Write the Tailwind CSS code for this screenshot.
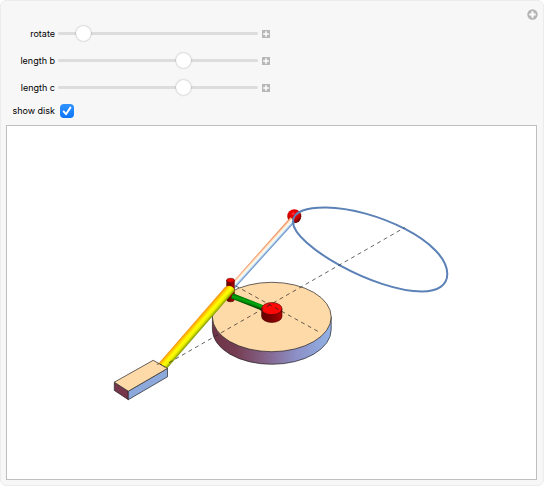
<!DOCTYPE html>
<html lang="en">
<head>
<meta charset="utf-8">
<meta name="viewport" content="width=device-width, initial-scale=1">
<title>Crank linkage</title>
<script src="https://cdn.jsdelivr.net/npm/@tailwindcss/browser@4"></script>
</head>
<body class="bg-white font-['Inter','Liberation_Sans',sans-serif] text-[9px] font-normal text-black">
<main class="rounded-md border border-[#ececec] bg-[#f7f7f7] pr-1.5 pb-[5px] pl-[5px]">
  <header class="flex h-[19px] items-end justify-end">
    <button type="button" aria-label="Show options" class="-mr-px block">
      <svg class="size-[11px]" viewBox="0 0 11 11"><circle cx="5.5" cy="5.5" r="5.2" fill="#b4b4b4"/><path d="M5.5 2.3v6.4M2.3 5.5h6.4" stroke="#fff" stroke-width="2"/></svg>
    </button>
  </header>

  <form class="grid grid-cols-[49px_200px_auto] items-center justify-start gap-x-[3px] auto-rows-[27px]">
    <label for="rotate" class="text-right whitespace-nowrap">rotate</label>
    <input id="rotate" type="range" min="0" max="1000" value="98" class="h-4 w-full appearance-none bg-transparent [&::-webkit-slider-runnable-track]:h-[3px] [&::-webkit-slider-runnable-track]:rounded-full [&::-webkit-slider-runnable-track]:bg-[#dddddd] [&::-webkit-slider-thumb]:-mt-[6px] [&::-webkit-slider-thumb]:size-[15px] [&::-webkit-slider-thumb]:appearance-none [&::-webkit-slider-thumb]:rounded-full [&::-webkit-slider-thumb]:bg-white [&::-webkit-slider-thumb]:shadow-[0_0_2px_rgba(0,0,0,0.35)]">
    <button type="button" aria-label="Rotate controls" class="ml-px size-[8px] bg-[#b8b8b8]"><svg class="size-full" viewBox="0 0 8 8"><path d="M4 1.2v5.6M1.2 4h5.6" stroke="#fff" stroke-width="1.5"/></svg></button>

    <label for="length-b" class="text-right whitespace-nowrap">length b</label>
    <input id="length-b" type="range" min="0" max="1000" value="640" class="h-4 w-full appearance-none bg-transparent [&::-webkit-slider-runnable-track]:h-[3px] [&::-webkit-slider-runnable-track]:rounded-full [&::-webkit-slider-runnable-track]:bg-[#dddddd] [&::-webkit-slider-thumb]:-mt-[6px] [&::-webkit-slider-thumb]:size-[15px] [&::-webkit-slider-thumb]:appearance-none [&::-webkit-slider-thumb]:rounded-full [&::-webkit-slider-thumb]:bg-white [&::-webkit-slider-thumb]:shadow-[0_0_2px_rgba(0,0,0,0.35)]">
    <button type="button" aria-label="Length b controls" class="ml-px size-[8px] bg-[#b8b8b8]"><svg class="size-full" viewBox="0 0 8 8"><path d="M4 1.2v5.6M1.2 4h5.6" stroke="#fff" stroke-width="1.5"/></svg></button>

    <label for="length-c" class="text-right whitespace-nowrap">length c</label>
    <input id="length-c" type="range" min="0" max="1000" value="640" class="h-4 w-full appearance-none bg-transparent [&::-webkit-slider-runnable-track]:h-[3px] [&::-webkit-slider-runnable-track]:rounded-full [&::-webkit-slider-runnable-track]:bg-[#dddddd] [&::-webkit-slider-thumb]:-mt-[6px] [&::-webkit-slider-thumb]:size-[15px] [&::-webkit-slider-thumb]:appearance-none [&::-webkit-slider-thumb]:rounded-full [&::-webkit-slider-thumb]:bg-white [&::-webkit-slider-thumb]:shadow-[0_0_2px_rgba(0,0,0,0.35)]">
    <button type="button" aria-label="Length c controls" class="ml-px size-[8px] bg-[#b8b8b8]"><svg class="size-full" viewBox="0 0 8 8"><path d="M4 1.2v5.6M1.2 4h5.6" stroke="#fff" stroke-width="1.5"/></svg></button>

    <div class="col-span-3 grid h-5 grid-cols-subgrid items-center self-start">
      <label for="show-disk" class="text-right whitespace-nowrap">show disk</label>
      <span class="relative ml-0.5 block size-[14px]">
        <input id="show-disk" type="checkbox" checked class="peer block size-full appearance-none rounded-[4px] border border-[#c8c8c8] bg-white checked:border-0 checked:bg-linear-to-b checked:from-[#2f93ff] checked:to-[#0a75fa]">
        <svg class="pointer-events-none absolute inset-0 hidden size-full peer-checked:block" viewBox="0 0 14 14"><path d="M3.6 7.4 6 10.2 10.4 3.6" fill="none" stroke="#fff" stroke-width="1.9" stroke-linecap="round" stroke-linejoin="round"/></svg>
      </span>
    </div>
  </form>

  <section class="-mt-[3px] border border-[#bfbfbf] bg-white">
    <svg class="block h-auto w-full" viewBox="7 126 529 353" role="img" aria-label="Linkage with rotating disk, sliding block and traced curve">
      <defs>
        <linearGradient id="rim"><stop offset="0" stop-color="#6e3447"/><stop offset=".2" stop-color="#753d52"/><stop offset=".45" stop-color="#84648b"/><stop offset=".7" stop-color="#8c8fc5"/><stop offset="1" stop-color="#92b2e6"/></linearGradient>
        <linearGradient id="hub"><stop offset="0" stop-color="#650000"/><stop offset=".5" stop-color="#7c0000"/><stop offset="1" stop-color="#b00000"/></linearGradient>
        <linearGradient id="yellow" gradientUnits="userSpaceOnUse" x1="191" y1="325" x2="199" y2="332"><stop offset="0" stop-color="#f07818"/><stop offset=".25" stop-color="#ffc400"/><stop offset=".5" stop-color="#ffff00"/><stop offset=".72" stop-color="#eaf000"/><stop offset="1" stop-color="#789000"/></linearGradient>
        <linearGradient id="glass" gradientUnits="userSpaceOnUse" x1="262.3" y1="248.8" x2="266.5" y2="252.6"><stop offset="0" stop-color="#ee8c58"/><stop offset=".28" stop-color="#ffdcbc"/><stop offset=".5" stop-color="#fffff0"/><stop offset=".7" stop-color="#dceefa"/><stop offset="1" stop-color="#6f98cc"/></linearGradient>
        <linearGradient id="green" gradientUnits="userSpaceOnUse" x1="249" y1="299" x2="247" y2="305"><stop offset="0" stop-color="#006a00"/><stop offset=".4" stop-color="#00ac10"/><stop offset=".65" stop-color="#008c08"/><stop offset="1" stop-color="#003b00"/></linearGradient>
        <radialGradient id="ball" cx=".42" cy=".32" r=".68"><stop offset="0" stop-color="#ff4040"/><stop offset=".22" stop-color="#f00000"/><stop offset=".65" stop-color="#c80000"/><stop offset="1" stop-color="#600000"/></radialGradient>
      </defs>

      <g stroke="#222" stroke-width=".7" stroke-linejoin="round">
        <path d="M212.4 317v12.6a59.4 34.7 0 0 0 118.8 0V317z" fill="url(#rim)"/>
        <ellipse cx="271.8" cy="317" rx="59.4" ry="34.7" fill="#ffdaa9"/>
      </g>

      <circle cx="294.3" cy="216.2" r="7" fill="url(#ball)"/>
      <path d="M233.5 281 290.5 217 294.8 222.2 234.5 288.7z" fill="url(#glass)"/>

      <path d="M226.6 280.3v19.2a3.9 2.3 0 0 0 7.8 0v-19.2z" fill="url(#hub)" stroke="#400" stroke-width=".5"/>
      <ellipse cx="230.5" cy="280.3" rx="3.9" ry="2.1" fill="#f00000" stroke="#400" stroke-width=".5"/>
      <path d="M233 293.3 263.5 305.2V311.3L231 298.6z" fill="url(#green)"/>
      <path d="M261.6 308.6v7.8a10.2 6.1 0 0 0 20.4 0v-7.8z" fill="url(#hub)" stroke="#400" stroke-width=".6"/>
      <ellipse cx="271.8" cy="308.6" rx="10.2" ry="6.1" fill="#ff0808" stroke="#400" stroke-width=".6"/>

      <path d="M157.8 364.3 224.8 287.3Q227.5 285 231 286.2 235 288 234.4 291.3L167.2 368.3z" fill="url(#yellow)"/>

      <g stroke="#222" stroke-width=".7" stroke-linejoin="round">
        <path d="M114.3 382.2 128.3 391.2V399.7L114.3 390.4z" fill="#75354a"/>
        <path d="M128.3 391.2 167.5 368.4V376.8L128.3 399.7z" fill="#8da9dc"/>
        <path d="M114.3 382.2 153.2 360.3 167.5 368.4 128.3 391.2z" fill="#ffdaa9"/>
      </g>
      <path d="M156.8 364.4Q160 363.3 163.2 366L166.6 368" fill="none" stroke="#222" stroke-width=".6" stroke-dasharray="2 1.5"/>

      <path d="M293 222C292.7 211 308 207.3 326 207.5 375 208 447.3 242 447.3 274 447.3 285 438 291.5 422 291.5 375 291.5 293 245 293 222z" fill="none" stroke="#5b81b7" stroke-width="2"/>
      <g fill="none" stroke="#222" stroke-width=".7" stroke-dasharray="4 3.5">
        <path d="M169 362.7 404.6 227.6"/>
        <path d="M235.5 285.8 320 332.5"/>
      </g>
    </svg>
  </section>
</main>
</body>
</html>
